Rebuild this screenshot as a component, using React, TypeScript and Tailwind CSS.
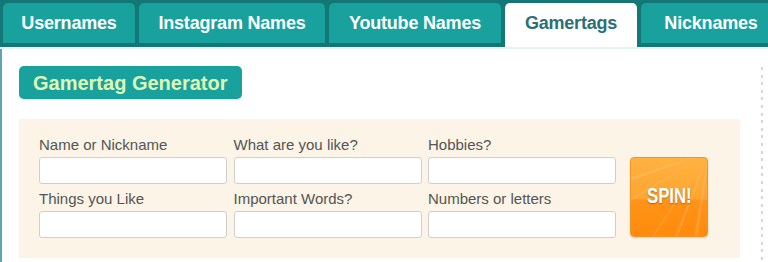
import React from 'react'

const tabs = [
  { label: 'Usernames', width: 'w-[132px]' },
  { label: 'Instagram Names', width: 'w-[186px]' },
  { label: 'Youtube Names', width: 'w-[172px]' },
  { label: 'Gamertags', width: 'w-[132px]', active: true },
  { label: 'Nicknames', width: 'w-[140px]' },
]

const fields = [
  'Name or Nickname',
  'What are you like?',
  'Hobbies?',
  'Things you Like',
  'Important Words?',
  'Numbers or letters',
]

function SpinButton() {
  return (
    <button className="relative mt-[21px] h-[80px] w-[78px] shrink-0 overflow-hidden rounded-[4px] border border-[#ef9429] bg-[linear-gradient(to_bottom,#ffb241_0%,#ffa530_52%,#ff9418_54%,#ff8a0c_100%)] shadow-[0_1px_2px_rgba(0,0,0,0.15)]">
      <svg className="absolute inset-0" width="78" height="80" viewBox="0 0 78 80">
        {[200, 212, 224, 236, 248, 260].map((a) => {
          const r = (a * Math.PI) / 180
          const x = 78 + Math.cos(r) * 120
          const y = -6 - Math.sin(r) * 120
          return (
            <polygon
              key={a}
              points={`78,-6 ${x},${y} ${x + 6},${y - 6}`}
              fill="rgba(255,255,255,0.14)"
            />
          )
        })}
      </svg>
      <span className="relative inline-block scale-x-[0.76] font-['Liberation_Sans',Arial,sans-serif] text-[22px] font-bold leading-none text-white [text-shadow:0_1px_2px_rgba(120,50,0,0.55)]">
        SPIN!
      </span>
    </button>
  )
}

export default function App() {
  return (
    <div className="h-[262px] w-[768px] overflow-hidden bg-white font-['Liberation_Sans',Arial,sans-serif]">
      {/* Tabs */}
      <div className="flex h-[47px] gap-[4px] bg-[#137775] pl-[3px] pt-[3px]">
        {tabs.map((t) => (
          <div
            key={t.label}
            className={`${t.width} flex shrink-0 items-center justify-center rounded-t-[5px] text-[18px] font-bold tracking-[-0.2px] ${
              t.active
                ? 'h-[44px] bg-white pb-[4px] text-[#2c6f76]'
                : 'h-[40px] bg-[#19a19e] text-white'
            }`}
          >
            {t.label}
          </div>
        ))}
      </div>

      <div className="flex h-[215px] border-t-2 border-[#e2f5f5]">
        <div className="flex-1 border-l-2 border-[#5ea4b4] pl-[17px] pt-[17px]">
          <div className="inline-flex h-[33px] items-center rounded-[5px] bg-[#19a19e] px-[14px] text-[20px] font-bold text-[#dff7b6] shadow-[0_1px_1px_rgba(0,0,0,0.1)]">
            Gamertag Generator
          </div>

          <div className="mt-[20px] flex h-[139px] w-[721px] items-start bg-[#fbf4e7] pl-[20px] pt-[17px]">
            <div className="grid grid-cols-[188px_188px_188px] gap-x-[6.5px] gap-y-[6px]">
              {fields.map((f) => (
                <div key={f} className="flex flex-col">
                  <label className="mb-[3px] text-[15px] leading-[18px] text-[#555]">{f}</label>
                  <input className="h-[27px] w-[188px] rounded-[3px] border border-[#cfcfcf] bg-white" />
                </div>
              ))}
            </div>
            <div className="ml-[14px]">
              <SpinButton />
            </div>
          </div>
        </div>
        <div className="mr-[5px] mt-[18px] w-[2px] bg-[repeating-linear-gradient(to_bottom,#d6d6d6_0_3px,transparent_3px_7.6px)]" />
      </div>
    </div>
  )
}
